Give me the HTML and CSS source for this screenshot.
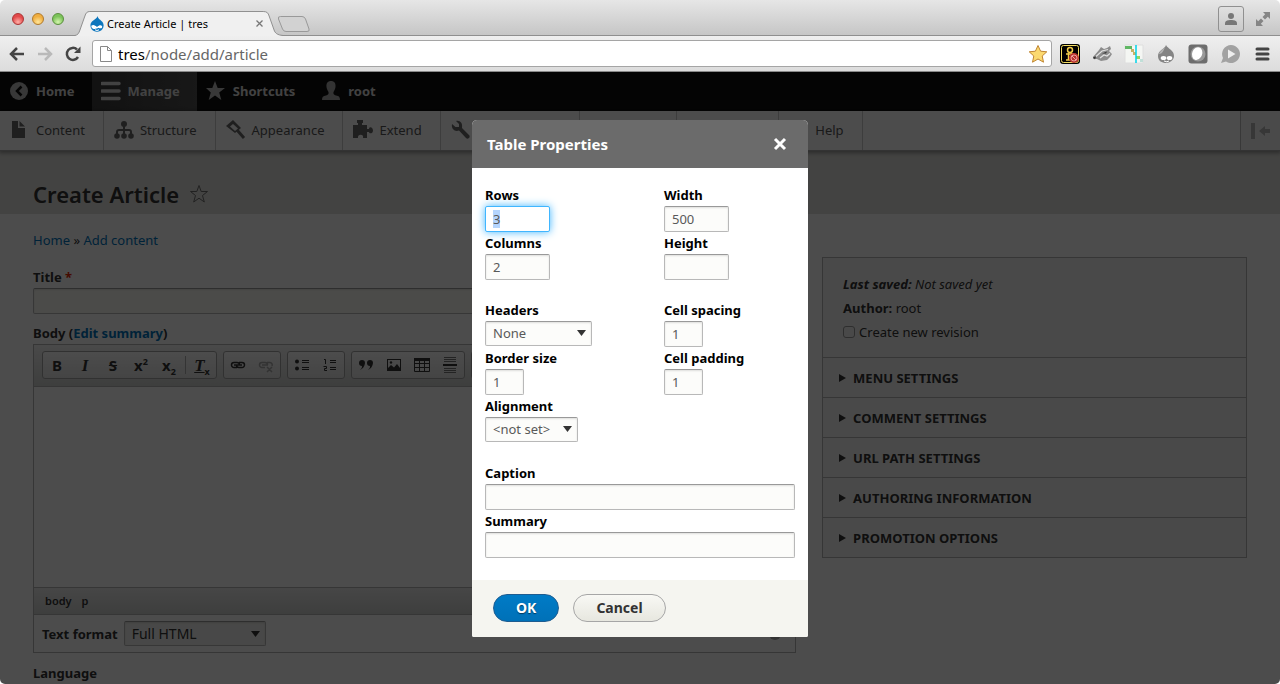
FILE: index.html
```
<!DOCTYPE html>
<html lang="en">
<head>
    <meta charset="UTF-8">
    <title>Create Article | tres</title>
    <link rel="stylesheet" href="styles.css">
</head>
<body>
<div class="window">
    <!-- browser -->
    <div class="tabstrip">
        <div class="lights">
            <span class="light red"></span>
            <span class="light yellow"></span>
            <span class="light green"></span>
        </div>
        <div class="tab">
            <svg class="tab-shape" viewBox="0 0 210 25" preserveAspectRatio="none">
                <path d="M0 24.5C3 24 4 22 5 19L10 5C11 2 12 .5 15 .5H190C194 .5 195 2 196 5L201 19C202 22 204 24 210 24.5V26H0Z" fill="#f0f0f0" stroke="#8f8f8f"/>
            </svg>
            <svg class="favicon" viewBox="0 0 16 16">
                <path d="M8.500 0C8 2.500 5 3.500 3 5.500C1 7.500 1 11 2.500 13C5 16.500 11 16.500 13.500 13C15 11 15 8 13.500 6C11.500 3.500 9 3 8.500 0Z" fill="#0d76bd"/>
                <path d="M2.500 9.500C4.500 8 6.500 9.500 8 11C10 9 12 8.500 13 10C14 12 11.500 13 9.500 11.800C8 12.500 6 13.500 4 12.800C2.500 12 2 10.500 2.500 9.500Z" fill="#fff"/>
                <path d="M6 13.800Q8 15.200 10 13.800" stroke="#fff" fill="none"/>
            </svg>
            <span class="tab-title">Create Article | tres</span>
            <button class="tab-close" type="button" aria-label="Close tab">
                <svg width="7" height="7" viewBox="0 0 7 7"><path d="M.5 .5L6.500 6.500M6.500 .5L.5 6.500" stroke="#777" stroke-width="1.300"/></svg>
            </button>
        </div>
        <button class="new-tab" type="button" aria-label="New tab">
            <svg width="33" height="17" viewBox="0 0 33 17"><path d="M3.500 .5H25Q27.500 .5 28.500 3L32 13Q33 15.500 30 15.500H9Q6.500 15.500 5.500 13L1.500 3Q.5 .5 3.500 .5Z" fill="#d2d2d2" stroke="#999"/></svg>
        </button>
        <div class="strip-right">
            <button class="user-button" type="button" aria-label="User">
                <svg width="14" height="14" viewBox="0 0 14 14" fill="#777"><circle cx="7" cy="4" r="3"/><path d="M1 13V11.500C1 8.500 4 8 7 8S13 8.500 13 11.500V13Z"/></svg>
            </button>
            <svg width="14" height="14" viewBox="0 0 14 14" fill="#858585"><path d="M7 0H14V7L11.800 4.800L9 7.500L6.500 5L9.200 2.200ZM7 14H0V7L2.200 9.200L5 6.500L7.500 9L4.800 11.800Z"/></svg>
        </div>
    </div>
    <div class="navbar">
        <div class="nav-buttons">
            <button type="button" aria-label="Back"><svg width="16" height="14" viewBox="0 0 16 14"><path d="M15 7H2M8 1L2 7L8 13" fill="none" stroke="#454545" stroke-width="2.500"/></svg></button>
            <button type="button" aria-label="Forward"><svg width="16" height="14" viewBox="0 0 16 14"><path d="M1 7H14M8 1L14 7L8 13" fill="none" stroke="#b9b9b9" stroke-width="2.500"/></svg></button>
            <button type="button" aria-label="Reload"><svg width="16" height="16" viewBox="0 0 16 16"><path d="M13 11A6 6 0 1 1 12 3.500" fill="none" stroke="#454545" stroke-width="2.500"/><path d="M15.500 .5V7H9Z" fill="#454545"/></svg></button>
        </div>
        <div class="address">
            <svg width="12" height="16" viewBox="0 0 12 16"><path d="M.5 .5H7.500L11.500 4.500V15.500H.5ZM7.500 .5V4.500H11.500" fill="#fff" stroke="#888"/></svg>
            <span class="url"><b>tres</b>/node/add/article</span>
            <svg width="20" height="20" viewBox="0 0 20 20"><path d="M10 1.500L12.600 7.200L18.800 7.800L14.200 12L15.500 18.200L10 15L4.500 18.200L5.800 12L1.200 7.800L7.400 7.200Z" fill="#fbd970" stroke="#c08531"/></svg>
        </div>
        <div class="extensions">
            <svg width="20" height="20" viewBox="0 0 20 20"><rect width="20" height="20" rx="3" fill="#000"/><rect x="1.500" y="1.500" width="17" height="17" rx="2" fill="none" stroke="#f3dc62"/><circle cx="10" cy="6" r="2.500" fill="none" stroke="#f2cc4c" stroke-width="1.500"/><path d="M6 10H14M8.500 9V16M11.500 9V13M6 16H10" stroke="#f2cc4c" stroke-width="1.500"/><circle cx="14" cy="14" r="5" fill="#b8322e"/><circle cx="14" cy="14" r="3" fill="none" stroke="#eca29c"/><path d="M12 12L16 16" stroke="#eca29c"/></svg>
            <svg width="20" height="20" viewBox="0 0 20 20"><path d="M1 13L7 6L9 3L12 5L15 4L18 2L19 5L17 7L20 10L18 13L15 16L9 17L5 15L1 15Z" fill="#8c8c8c"/><path d="M4 12.500L10 7L16 5.500M8 14L12 11L15 12L18 9.500" stroke="#e1e1e1" stroke-width="1.200" fill="none"/><path d="M10 9.500L15 7.500L14 9.500ZM1 13L4 12.500L3 15.500Z" fill="#333"/></svg>
            <svg width="20" height="20" viewBox="0 0 20 20"><path d="M1 1H19V19H1Z" fill="#f4f6f3" stroke="#dedede"/><path d="M1 2H8V5H1Z" fill="#60b764"/><path d="M7 5H10V8H12V11H9V8H7Z" fill="#c9b164"/><path d="M12 12H16V15H12Z" fill="#94d663"/><path d="M16 15H19V18H16Z" fill="#c0dfd8"/><path d="M12 1V19" stroke="#00d2e8" stroke-width="1.500"/></svg>
            <svg width="20" height="20" viewBox="0 0 20 20"><path d="M10 1C9 5 2 6 2 12C2 17 6 19 10 19S18 16 18 12C18 6 12 5 10 1Z" fill="#858585"/><path d="M10 1C9 5 4 6 3 10C7 10 8 5 10 1Z" fill="#b5b5b5"/><ellipse cx="7.500" cy="14" rx="2.800" ry="2" fill="#fff"/><ellipse cx="13.500" cy="14" rx="2.800" ry="2" fill="#fff"/><path d="M8 17Q11 18.500 13 17" stroke="#fff" fill="none"/></svg>
            <svg width="20" height="20" viewBox="0 0 20 20"><rect x=".5" y=".5" width="19" height="19" rx="3" fill="#6d6d6d"/><circle cx="10" cy="10" r="7.500" fill="#999"/><ellipse cx="9" cy="9.500" rx="5" ry="6.500" fill="#fff" transform="rotate(20 9 10)"/></svg>
            <svg width="20" height="20" viewBox="0 0 20 20"><path d="M11 1A9 9 0 1 1 6 17.500L1 19L3 14A9 9 0 0 1 11 1Z" fill="#a2a2a2"/><path d="M8 5.500L15.500 10L8 14.500Z" fill="#eee"/></svg>
            <svg width="20" height="20" viewBox="0 0 20 20"><path d="M5 5H16M5 10H16M5 15H16" stroke="#444" stroke-width="3" stroke-linecap="round"/></svg>
        </div>
    </div>

    <!-- page -->
    <div class="viewport">
        <nav class="toolbar-bar">
            <a href="#"><svg width="18" height="18" viewBox="0 0 18 18"><circle cx="9" cy="9" r="9" fill="#bbb"/><path d="M11.500 4.500L7 9L11.500 13.500" fill="none" stroke="#0f0f0f" stroke-width="2.500"/></svg>Home</a>
            <a href="#" class="active"><svg width="20" height="20" viewBox="0 0 20 20"><path d="M1 2.500H18M1 10H18M1 17.500H18" stroke="#ddd" stroke-width="3.500" stroke-linecap="round"/></svg>Manage</a>
            <a href="#"><svg width="20" height="20" viewBox="0 0 20 20"><path d="M9 0L11.700 7H19L13.200 11.500L15.300 19L9 14.500L2.700 19L4.800 11.500L0 7H6.300Z" fill="#bbb"/></svg>Shortcuts</a>
            <a href="#"><svg width="20" height="20" viewBox="0 0 20 20"><path d="M10 0C13 0 15 2 14.500 6C14.300 8 13.500 9 12.500 11C12 13 13 14 15 14.500C18 15 19 16 19 19H1C1 16 2 15 5 14.500C7 14 8 13 7.500 11C6.500 9 5.700 8 5.500 6C5 2 7 0 10 0Z" fill="#aaa"/></svg>root</a>
        </nav>
        <nav class="toolbar-tray">
            <a href="#"><svg width="20" height="20" viewBox="0 0 20 20"><path d="M2 1H8V8H15V18H2ZM9.500 1L15 6.500H9.500Z"/></svg>Content</a>
            <a href="#"><svg width="20" height="20" viewBox="0 0 20 20"><circle cx="10" cy="4" r="3"/><circle cx="3" cy="16" r="2.800"/><circle cx="10" cy="16" r="2.800"/><circle cx="17" cy="16" r="2.800"/><path d="M10 4V15M3 15V12Q3 10 5 10H15Q17 10 17 12V15" fill="none" stroke="#6a6a6a" stroke-width="2"/></svg>Structure</a>
            <a href="#"><svg width="20" height="20" viewBox="0 0 20 20"><path d="M0 6L7 0L15 8L9 13Z"/><path d="M7 4L4 6.500L9 11L12 8.500Z" fill="#fff"/><path d="M11 10L18 18" stroke="#6a6a6a" stroke-width="3"/></svg>Appearance</a>
            <a href="#"><svg width="20" height="20" viewBox="0 0 20 20"><path d="M0 5H5V3H4V0H10V3H9V5H14V9H16C16 6 20 7 20 10.500C20 14 16 14 16 12H14V18H10C11.500 13.500 4 13.500 5 18H0Z"/></svg>Extend</a>
            <a href="#"><svg width="20" height="20" viewBox="0 0 20 20"><path d="M5 1L8 4V7H4.500L1 4C0 9 4 12 8 10.500L15 18C17 20 20 17 18 15L11 8C12 3 9 0 5 1Z"/></svg>Configuration</a>
            <a href="#" class="plain">People</a>
            <a href="#" class="plain">Reports</a>
            <a href="#" class="plain">Help</a>
            <button class="tray-toggle" type="button" aria-label="Vertical orientation">
                <svg width="20" height="16" viewBox="0 0 20 16" fill="#b8b8b8"><path d="M0 0H4V16H0ZM8 8L14 3V6H19V10H14V13Z"/></svg>
            </button>
        </nav>
        <header class="page-header">
            <h1>Create Article</h1>
            <svg width="20" height="20" viewBox="0 0 20 20"><path d="M10 1.500L12.200 7.500H18.500L13.500 11.500L15.300 18L10 14.200L4.700 18L6.500 11.500L1.500 7.500H7.800Z" fill="none" stroke="#707070"/></svg>
        </header>
        <div class="content">
            <p class="breadcrumb"><a href="#">Home</a> » <a href="#">Add content</a></p>
            <div class="columns">
                <main class="main">
                    <label class="label" for="title">Title <span class="required">*</span></label>
                    <input class="field wide title-field" id="title" type="text">
                    <div class="label body-label">Body (<a href="#">Edit summary</a>)</div>
                    <div class="editor">
                        <div class="editor-top">
                            <div class="group">
                                <button type="button" class="glyph">B</button>
                                <button type="button" class="glyph"><i>I</i></button>
                                <button type="button" class="glyph"><s>S</s></button>
                                <button type="button" class="glyph">x<sup>2</sup></button>
                                <button type="button" class="glyph">x<sub>2</sub></button>
                                <span class="separator"></span>
                                <button type="button" class="glyph"><i><u>T</u></i><sub>x</sub></button>
                            </div>
                            <div class="group">
                                <button type="button" aria-label="Link"><svg width="16" height="16" viewBox="0 0 16 16"><path d="M7 10.500H4A2.500 2.500 0 0 1 4 5.500H7Q9.500 5.500 9.500 8M9 5.500H12A2.500 2.500 0 0 1 12 10.500H9Q6.500 10.500 6.500 8M4 8H12" fill="none" stroke="#333" stroke-width="1.500"/></svg></button>
                                <button type="button" aria-label="Unlink"><svg width="16" height="16" viewBox="0 0 16 16"><path d="M7 10.500H4A2.500 2.500 0 0 1 4 5.500H7Q9.500 5.500 9.500 8M9 5.500H12A2.500 2.500 0 0 1 14 9M4 8H10M9 10L14 15M14 10L9 15" fill="none" stroke="#aaa" stroke-width="1.500"/></svg></button>
                            </div>
                            <div class="group">
                                <button type="button" aria-label="Bulleted list"><svg width="16" height="16" viewBox="0 0 16 16"><circle cx="3" cy="4.500" r="2" fill="#333"/><circle cx="3" cy="11.500" r="2" fill="#333"/><path d="M8 3.500H15M8 5.500H15M8 10.500H15M8 12.500H15" stroke="#333"/></svg></button>
                                <button type="button" aria-label="Numbered list"><svg width="16" height="16" viewBox="0 0 16 16"><path d="M2 2.500H3.500V7M1.500 9.500H4.500V11.500H2.500V13.500H5M8 3.500H14M8 5.500H14M8 10.500H14M8 12.500H14" fill="none" stroke="#333"/></svg></button>
                            </div>
                            <div class="group">
                                <button type="button" aria-label="Block quote"><svg width="16" height="16" viewBox="0 0 16 16" fill="#333"><path d="M1 6A3 3 0 1 1 7 6Q6.500 11 2 13Q4.500 11 4 9Q1 9 1 6ZM9 6A3 3 0 1 1 15 6Q14.500 11 10 13Q12.500 11 12 9Q9 9 9 6Z"/></svg></button>
                                <button type="button" aria-label="Image"><svg width="16" height="16" viewBox="0 0 16 16"><rect x="1.500" y="2.500" width="13" height="11" fill="none" stroke="#333"/><path d="M2 13V11L5 8L8 10.500L11 7L14 11V13Z" fill="#333"/><circle cx="5" cy="5.500" r="1.200" fill="#333"/></svg></button>
                                <button type="button" aria-label="Table"><svg width="16" height="16" viewBox="0 0 16 16"><path d="M.5 2V14.500H15.500V2M.5 6.500H15.500M.5 10.500H15.500M5.500 3V14M10.500 3V14" fill="none" stroke="#333"/><path d="M0 1H16V4H0Z" fill="#333"/></svg></button>
                                <button type="button" aria-label="Horizontal line"><svg width="16" height="16" viewBox="0 0 16 16"><path d="M2 .5H14M2 2.500H14M2 4.500H14M2 11.500H14M2 13.500H14M2 15.500H14" stroke="#777"/><path d="M1 8H15" stroke="#333" stroke-width="2"/></svg></button>
                            </div>
                            <div class="group">
                                <button type="button" aria-label="Source"><svg width="16" height="16" viewBox="0 0 16 16"><path d="M5 4L1 8L5 12M11 4L15 8L11 12" fill="none" stroke="#333" stroke-width="1.500"/></svg></button>
                            </div>
                        </div>
                        <div class="editor-body"></div>
                        <div class="editor-path"><span>body</span><span>p</span></div>
                    </div>
                    <div class="format">
                        <label for="format">Text format</label>
                        <select class="field select format-select" id="format"><option>Full HTML</option></select>
                        <a class="format-help" href="#" aria-label="About text formats"></a>
                    </div>
                    <div class="label language">Language</div>
                </main>
                <aside class="sidebar">
                    <div class="meta">
                        <div><i><b>Last saved:</b> Not saved yet</i></div>
                        <div><b>Author:</b> root</div>
                        <div class="revision"><input type="checkbox" id="revision"><label for="revision">Create new revision</label></div>
                    </div>
                    <details><summary>Menu settings</summary></details>
                    <details><summary>Comment settings</summary></details>
                    <details><summary>URL path settings</summary></details>
                    <details><summary>Authoring information</summary></details>
                    <details><summary>Promotion options</summary></details>
                </aside>
            </div>
        </div>

        <!-- dialog -->
        <div class="overlay">
            <form class="dialog" role="dialog" aria-labelledby="dialog-title">
                <div class="dialog-title">
                    <h2 id="dialog-title">Table Properties</h2>
                    <button type="button" class="dialog-close" aria-label="Close"><svg width="14" height="14" viewBox="0 0 14 14"><path d="M2 2L12 12M12 2L2 12" stroke="#fff" stroke-width="3"/></svg></button>
                </div>
                <div class="dialog-body">
                    <div class="pair">
                        <div class="item"><label for="rows">Rows</label><input class="field medium" id="rows" type="text" value="3"></div>
                        <div class="item"><label for="width">Width</label><input class="field medium" id="width" type="text" value="500"></div>
                        <div class="item"><label for="columns">Columns</label><input class="field medium" id="columns" type="text" value="2"></div>
                        <div class="item"><label for="height">Height</label><input class="field medium" id="height" type="text"></div>
                    </div>
                    <div class="pair">
                        <div class="item"><label for="headers">Headers</label><select class="field select headers" id="headers"><option>None</option></select></div>
                        <div class="item"><label for="spacing">Cell spacing</label><input class="field small" id="spacing" type="text" value="1"></div>
                        <div class="item"><label for="border">Border size</label><input class="field small" id="border" type="text" value="1"></div>
                        <div class="item"><label for="padding">Cell padding</label><input class="field small" id="padding" type="text" value="1"></div>
                        <div class="item"><label for="align">Alignment</label><select class="field select align" id="align"><option>&lt;not set&gt;</option></select></div>
                    </div>
                    <div>
                        <div class="item"><label for="caption">Caption</label><input class="field wide" id="caption" type="text"></div>
                        <div class="item"><label for="summary">Summary</label><input class="field wide" id="summary" type="text"></div>
                    </div>
                </div>
                <div class="dialog-footer">
                    <button type="button" class="button primary">OK</button>
                    <button type="button" class="button">Cancel</button>
                </div>
            </form>
        </div>
    </div>
</div>
<script>
    document.getElementById("rows").select();
</script>
</body>
</html>
```

FILE: styles.css
```
* {
    box-sizing: border-box;
    margin: 0;
    padding: 0;
}

html, body {
    height: 100%;
    overflow: hidden;
    background: #fff;
}

body, button, input, select {
    font-family: "Noto Sans", "Open Sans", sans-serif;
    font-size: 13px;
}

button {
    border: none;
    background: none;
}

svg {
    display: block;
    flex: none;
}

a {
    color: #0074bd;
    text-decoration: none;
}

.window {
    display: flex;
    flex-direction: column;
    height: 100%;
    border-radius: 5px;
    overflow: hidden;
}

/* browser */
.tabstrip {
    display: flex;
    align-items: flex-end;
    height: 36px;
    background: linear-gradient(#e6e6e6, #c6c6c6);
    border-bottom: 1px solid #8f8f8f;
}

.lights {
    display: flex;
    gap: 8px;
    width: 75px;
    padding: 0 0 10px 12px;
}

.light {
    width: 12px;
    height: 12px;
    border-radius: 50%;
    border: 1px solid #a33;
    background: radial-gradient(circle at 50% 80%, #ffb0a8, #e2494a 60%);
}

.light.yellow {
    border-color: #b07a2c;
    background: radial-gradient(circle at 50% 80%, #ffe69a, #f0ae40 60%);
}

.light.green {
    border-color: #5a8f3d;
    background: radial-gradient(circle at 50% 80%, #d5f5ae, #7cc35a 60%);
}

.tab {
    position: relative;
    display: flex;
    align-items: center;
    width: 208px;
    height: 25px;
    padding: 0 20px 0 14px;
    margin-bottom: -1px;
}

.tab-shape {
    position: absolute;
    left: 0;
    top: 0;
    width: 100%;
    height: 100%;
}

.favicon {
    position: relative;
    width: 16px;
    height: 16px;
}

.tab-title {
    position: relative;
    flex: 1;
    margin-left: 2px;
    font-size: 11px;
    color: #000;
}

.tab-close {
    position: relative;
}

.new-tab {
    margin: 0 0 2px -6px;
}

.strip-right {
    display: flex;
    align-items: center;
    gap: 12px;
    margin-left: auto;
    padding: 0 10px 3px 0;
}

.user-button {
    display: flex;
    align-items: center;
    justify-content: center;
    width: 26px;
    height: 26px;
    border: 1px solid #909090;
    border-radius: 3px;
}

.navbar {
    display: flex;
    align-items: center;
    height: 36px;
    padding-right: 8px;
    background: linear-gradient(#efefef, #dcdcdc);
    border-bottom: 1px solid #8a8a8a;
}

.nav-buttons {
    display: flex;
    align-items: center;
    gap: 12px;
    width: 92px;
    padding-left: 9px;
}

.address {
    display: flex;
    flex: 1;
    align-items: center;
    height: 27px;
    padding: 0 3px 0 7px;
    border: 1px solid #a5a5a5;
    border-radius: 3px;
    background: #fff;
}

.url {
    flex: 1;
    margin-left: 6px;
    font-size: 15px;
    color: #666;
}

.url b {
    font-weight: normal;
    color: #000;
}

.extensions {
    display: flex;
    gap: 12px;
    margin-left: 8px;
}

/* page */
.viewport {
    position: relative;
    flex: 1;
    overflow: hidden;
    background: #fff;
    color: #333;
}

.toolbar-bar {
    display: flex;
    height: 39px;
    background: #0f0f0f;
}

.toolbar-bar a {
    display: flex;
    align-items: center;
    gap: 7px;
    padding: 0 17px 2px 9px;
    color: #ddd;
    font-weight: bold;
}

.toolbar-bar a svg {
    width: 20px;
}

.toolbar-bar a.active {
    background: linear-gradient(90deg, #3c3c3c, #505050);
}

.toolbar-tray {
    position: relative;
    display: flex;
    height: 40px;
    background: #fff;
    border-bottom: 1px solid #aaa;
    box-shadow: 0 1px 4px 1px rgba(0, 0, 0, .35);
}

.toolbar-tray a {
    display: flex;
    align-items: center;
    gap: 6px;
    padding: 0 18px 2px 10px;
    border-right: 1px solid #ccc;
    color: #565656;
}

.toolbar-tray a svg {
    fill: #6a6a6a;
}

.toolbar-tray a.plain {
    padding-left: 36px;
}

.tray-toggle {
    margin-left: auto;
    padding: 0 9px 0 10px;
    border-left: 1px solid #bbb;
    background: #f7f7f7;
}

.page-header {
    display: flex;
    align-items: center;
    gap: 10px;
    height: 63px;
    padding: 23px 33px 0;
    background: #e0e0dc;
}

h1 {
    font-size: 22px;
    font-weight: 600;
    line-height: 30px;
}

.content {
    padding: 16px 33px 0;
}

.breadcrumb {
    line-height: 20px;
}

.columns {
    display: grid;
    grid-template-columns: 1fr 35%;
    gap: 26px;
    align-items: start;
    padding-top: 7px;
}

.main {
    padding-top: 9px;
}

.label, .item label {
    display: block;
    line-height: 22px;
    font-weight: bold;
}

.required {
    color: #e62600;
}

.body-label {
    margin-top: 8px;
}

.field {
    display: block;
    height: 26px;
    padding: 0 7px;
    border: 1px solid #b8b8b8;
    border-top-color: #999;
    border-radius: 2px;
    background-color: #fcfcfa;
    box-shadow: inset 0 1px 2px rgba(0, 0, 0, .12);
    color: #595959;
}

.select {
    height: 25px;
    appearance: none;
    background-image: url("data:image/svg+xml,%3Csvg xmlns='http://www.w3.org/2000/svg' width='9' height='6'%3E%3Cpath d='M0 0H9L4.500 6Z' fill='%23333'/%3E%3C/svg%3E");
    background-repeat: no-repeat;
    background-position: right 5px center;
}

.wide {
    width: 100%;
}

.medium {
    width: 65px;
}

.small {
    width: 39px;
}

.headers {
    width: 107px;
}

.align {
    width: 93px;
}

.title-field {
    background-color: #fcfcf6;
}

.editor {
    border: 1px solid #b6b6b6;
}

.editor-top {
    display: flex;
    gap: 6px;
    padding: 6px 8px 7px;
    background: linear-gradient(#f5f5f5, #cfd1cf);
    border-bottom: 1px solid #b6b6b6;
}

.group {
    display: flex;
    align-items: center;
    height: 28px;
    border: 1px solid #a6a6a6;
    border-radius: 3px;
    background: linear-gradient(#fff, #e4e4e4);
}

.group button {
    display: flex;
    align-items: center;
    justify-content: center;
    width: 28px;
    height: 26px;
    color: #333;
}

.group .glyph {
    display: block;
    font-size: 15px;
    font-weight: bold;
    line-height: 24px;
}

.glyph i {
    font-family: "Liberation Serif", serif;
    font-size: 17px;
}

.glyph sup, .glyph sub {
    font-size: 9px;
    line-height: 0;
}

.separator {
    width: 1px;
    height: 18px;
    margin: 0 2px;
    background: #b0b0b0;
}

.editor-body {
    height: 200px;
}

.editor-path {
    display: flex;
    gap: 10px;
    padding: 0 11px;
    border-top: 1px solid #b6b6b6;
    background: linear-gradient(#ebebeb, #cfd1cf);
    font-size: 11px;
    font-weight: 600;
    line-height: 26px;
}

.format {
    display: flex;
    align-items: center;
    gap: 6px;
    padding: 6px 14px 6px 8px;
    border: 1px solid #b6b6b6;
    border-top: none;
    font-weight: bold;
}

.format-select {
    width: 142px;
    font-size: 14px;
    color: #333;
    background-color: #f2f2f0;
}

.format-help {
    width: 12px;
    height: 12px;
    margin-left: auto;
    border-radius: 50%;
    background: #aaa;
}

.language {
    margin-top: 9px;
}

.sidebar {
    border: 1px solid #b6b6b6;
    background: #f6f6f6;
}

.meta {
    padding: 14px 20px 13px;
    line-height: 24px;
}

.revision {
    display: flex;
    align-items: center;
    gap: 4px;
}

.revision input {
    appearance: none;
    width: 12px;
    height: 12px;
    border: 1px solid #999;
    border-radius: 3px;
}

summary {
    display: flex;
    align-items: center;
    gap: 7px;
    height: 40px;
    padding-left: 16px;
    border-top: 1px solid #b6b6b6;
    font-weight: bold;
    text-transform: uppercase;
}

summary::before {
    content: "";
    border-left: 7px solid #333;
    border-top: 4px solid transparent;
    border-bottom: 4px solid transparent;
}

/* dialog */
.overlay {
    position: absolute;
    inset: 0;
    display: flex;
    align-items: center;
    justify-content: center;
    background: rgba(0, 0, 0, .7);
}

.dialog {
    width: 336px;
    border-radius: 5px 5px 2px 2px;
    background: #fff;
    overflow: hidden;
}

.dialog-title {
    display: flex;
    align-items: center;
    justify-content: space-between;
    height: 48px;
    padding: 0 21px 0 15px;
    background: #6b6b6b;
    color: #fff;
}

h2 {
    font-size: 15px;
}

.dialog-body {
    display: grid;
    gap: 19px;
    padding: 16px 13px 22px;
}

.pair {
    display: grid;
    grid-template-columns: 179px 1fr;
}

.item {
    height: 48px;
    color: #000;
}

#rows:focus {
    outline: none;
    border-color: #40b6ff;
    background: #fff;
    box-shadow: 0 0 8px #40b6ff;
}

#rows::selection {
    background: #b4d5fe;
    color: #595959;
}

.dialog-footer {
    display: flex;
    gap: 14px;
    padding: 14px 21px 15px;
    background: #f5f5f0;
}

.button {
    height: 28px;
    padding: 0 22px;
    border: 1px solid #a6a6a6;
    border-radius: 14px;
    background: linear-gradient(#f8f8f4, #e7e7df);
    color: #333;
    font-size: 14px;
    font-weight: bold;
}

.button.primary {
    border-color: #1e5c90;
    background: linear-gradient(#007bc6, #0071b8);
    color: #fff;
    text-shadow: 0 1px 1px rgba(0, 0, 0, .5);
}
```
